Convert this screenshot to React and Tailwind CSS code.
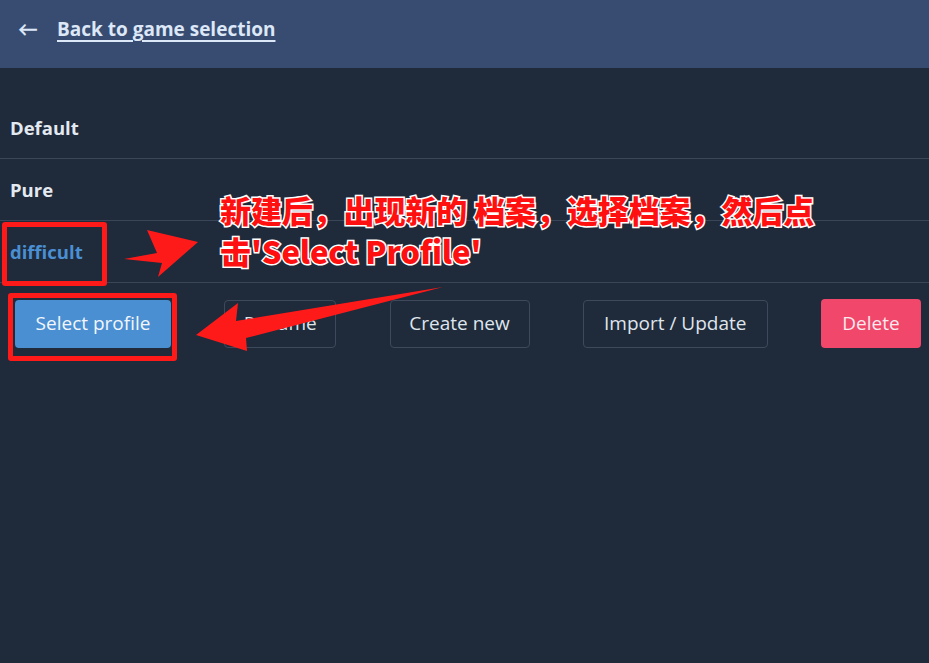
import React from 'react'

const rows = [
  { name: 'Default', active: false },
  { name: 'Pure', active: false },
  { name: 'difficult', active: true },
]

function Annotations() {
  return (
    <div className="pointer-events-none absolute inset-0">
      {/* red frames */}
      <div className="absolute left-[2px] top-[222px] h-[64px] w-[105px] rounded-[3px] border-[5px] border-[#ff1a1a]" />
      <div className="absolute left-[8px] top-[293px] h-[68px] w-[169px] rounded-[3px] border-[5px] border-[#ff1a1a]" />

      {/* arrows */}
      <svg className="absolute left-0 top-0" width="929" height="663" viewBox="0 0 929 663">
        <polygon points="124,259 157,253 147,230 198,242 158,277 162,263" fill="#ff1a1a" />
        <polygon points="196,335 238,303 236,321 443,287 246,338 247,351" fill="#ff1a1a" />
      </svg>

      {/* note */}
      <div className="absolute left-[220px] top-[189px] font-['Noto_Sans_CJK_SC','Noto_Sans',sans-serif] text-[31px] font-black leading-[41px] tracking-[-0.1px] text-[#ff1010] [-webkit-text-stroke:3px_white] [paint-order:stroke_fill]">
        <div>新建后，出现新的 档案，选择档案，然后点</div>
        <div>击'Select Profile'</div>
      </div>
    </div>
  )
}

export default function App() {
  return (
    <div className="relative min-h-[663px] w-full bg-[#1f2a3a] font-['Open_Sans','Lato',sans-serif]">
      {/* ------------ header ------------ */}
      <header className="flex h-[68px] items-start bg-[#384c71] pl-[18px] pt-[15px]">
        <span className="text-[20px] font-bold leading-[28px] text-[#dce7f7]">&#8592;</span>
        <a href="#" className="ml-[19px] text-[19px] font-bold leading-[28px] text-[#dce7f7] underline decoration-2 underline-offset-[4px]">
          Back to game selection
        </a>
      </header>

      {/* ------------ profiles ------------ */}
      <main className="pt-[29px]">
        {rows.map((r) => (
          <div key={r.name} className="flex h-[62px] items-center border-b border-[#3a4657] px-[10px]">
            <span className={`text-[18.5px] font-bold ${r.active ? 'text-[#4a8fd2]' : 'text-[#e3e9f1]'}`}>{r.name}</span>
          </div>
        ))}

        <div className="mt-[16px] flex items-center justify-between pl-[15px] pr-[8px]">
          <button className="h-[48px] w-[156px] rounded-[4px] bg-[#4a8fd2] text-[19px] text-[#f2f6fb]">Select profile</button>
          <button className="h-[48px] w-[112px] rounded-[4px] border border-[#3e4a5b] text-[19px] text-[#dfe5ed]">Rename</button>
          <button className="h-[48px] w-[140px] rounded-[4px] border border-[#3e4a5b] text-[19px] text-[#dfe5ed]">Create new</button>
          <button className="h-[48px] w-[185px] rounded-[4px] border border-[#3e4a5b] text-[19px] text-[#dfe5ed]">Import / Update</button>
          <button className="h-[49px] w-[100px] rounded-[4px] bg-[#f0476b] text-[19px] text-[#fbe9ee]">Delete</button>
        </div>
      </main>

      <Annotations />
    </div>
  )
}
